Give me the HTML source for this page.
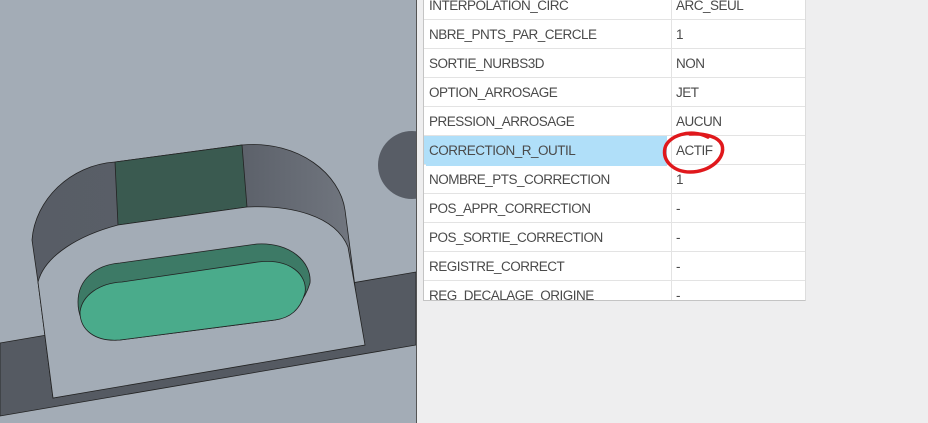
<!DOCTYPE html>
<html><head><style>
body{margin:0;width:928px;height:423px;overflow:hidden;background:#eeeeef;position:relative;font-family:"Liberation Sans",sans-serif}
svg{position:absolute;left:0;top:0}
#panel{position:absolute;left:416px;top:0;width:512px;height:423px;background:#eeeeef;border-left:1px solid #555}
#tbl{position:absolute;left:6px;top:-9px;width:381px;height:309px;background:#fff;border-left:1px solid #c4c4c4;border-bottom:1px solid #c4c4c4;border-right:1px solid #ddd;overflow:hidden}
.r{height:28px;border-bottom:1px solid #e3e3e3;position:relative;font-size:13.5px;letter-spacing:-0.5px;color:#4a4a4a;line-height:30px}
.r span{position:absolute;left:5px}
.r b{font-weight:normal;position:absolute;left:252px}
.r:after{content:"";position:absolute;left:247px;top:0;bottom:0;border-left:1px solid #e3e3e3}
.sel span{background:#b0dff9;left:2px;padding-left:3px;width:238px}
.sel{background:linear-gradient(90deg,#b0dff9 0,#b0dff9 242px,transparent 242px)}
</style></head><body>
<svg width="416" height="423" viewBox="0 0 416 423">
<defs><linearGradient id="g" x1="0" x2="1"><stop offset="0" stop-color="#585d66"/><stop offset="0.6" stop-color="#5a5f68"/><stop offset="1" stop-color="#737881"/></linearGradient></defs>
<rect width="416" height="423" fill="#a3acb6"/>
<circle cx="412" cy="165" r="34" fill="#585d66"/>
<polygon points="0,343 416,272 416,345 0,416" fill="#555a62" stroke="#222" stroke-width="0.8"/>
<path d="M38,282 L32,240 C35,200 70,165 115,162 L242,145 C300,140 340,175 345,210 L362,340 L53,398 Z" fill="url(#g)" stroke="#222" stroke-width="0.8"/>
<polygon points="115,162 242,145 247,207 118,225" fill="#3a5a50" stroke="#222" stroke-width="0.8"/>
<path d="M38,282 L53,398 L365,345 L348,247 C335,215 290,205 247,207 L118,225 C80,235 45,255 38,282 Z" fill="#a3acb6" stroke="#222" stroke-width="0.8"/>
<path d="M120,263 L257,244 C290,242 312,262 310,283 C305,300 292,316 275,320 L120,340 C95,342 78,325 78,302 C78,280 95,265 120,263 Z" fill="#3d7a66" stroke="#222" stroke-width="0.8"/>
<path d="M122,282 L258,262 C290,258 308,275 305,293 C300,310 290,318 275,320 L120,340 C95,342 80,330 80,312 C82,295 100,283 122,282 Z" fill="#4aab8b" stroke="#222" stroke-width="0.8"/>
</svg>
<div id="panel"><div id="tbl">
<div class="r"><span>INTERPOLATION_CIRC</span><b>ARC_SEUL</b></div>
<div class="r"><span>NBRE_PNTS_PAR_CERCLE</span><b>1</b></div>
<div class="r"><span>SORTIE_NURBS3D</span><b>NON</b></div>
<div class="r"><span>OPTION_ARROSAGE</span><b>JET</b></div>
<div class="r"><span>PRESSION_ARROSAGE</span><b>AUCUN</b></div>
<div class="r sel"><span>CORRECTION_R_OUTIL</span><b>ACTIF</b></div>
<div class="r"><span>NOMBRE_PTS_CORRECTION</span><b>1</b></div>
<div class="r"><span>POS_APPR_CORRECTION</span><b>-</b></div>
<div class="r"><span>POS_SORTIE_CORRECTION</span><b>-</b></div>
<div class="r"><span>REGISTRE_CORRECT</span><b>-</b></div>
<div class="r"><span>REG_DECALAGE_ORIGINE</span><b>-</b></div>
</div></div>
<svg width="928" height="423" style="pointer-events:none">
<path d="M708,137 C690,128 668,136 665,148 C662,162 675,172 690,172 C710,172 726,158 722,145 C719,137 705,133 690,134" fill="none" stroke="#e0181c" stroke-width="3.5" stroke-linecap="round"/>
</svg>
</body></html>
